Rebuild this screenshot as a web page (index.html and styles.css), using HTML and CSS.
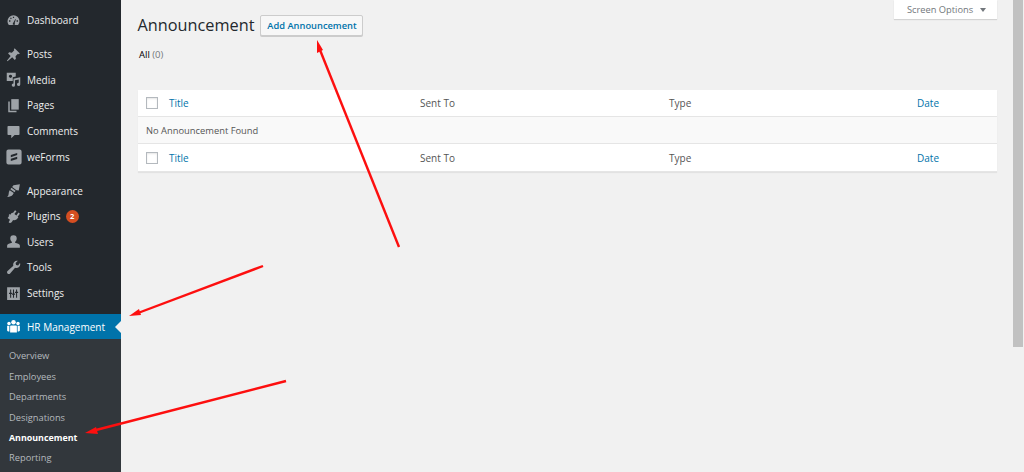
FILE: index.html
```html
<!DOCTYPE html>
<html lang="en">
<head>
<meta charset="utf-8">
<title>Announcement</title>
<link rel="stylesheet" href="styles.css">
</head>
<body>
<div class="app">
  <nav class="side">
    <ul class="menu">
      <li class="item"><svg class="ico" viewBox="0 0 20 20"><path fill-rule="evenodd" d="M10 3a8 8 0 0 0-8 8c0 2 .7 3.700 1.900 5h12.200A8 8 0 0 0 18 11a8 8 0 0 0-8-8zM9.200 5h1.600v1.800H9.200zM5.500 6.800l1.300-.7.800 1.400-1.300.8zM4 11.500V9.800h1.900v1.700zM9 14.500c0-.6.2-1 .5-1.300L12.500 8l.6.3-1.600 5.500c.3.300.5.500.5.700 0 .8-.6 1.300-1.500 1.300S9 15.300 9 14.500zM14.100 11.500V9.800H16v1.700z"/></svg><span>Dashboard</span></li>
      <li class="item gap"><svg class="ico" viewBox="0 0 20 20"><path d="M11.500 1.500l7 7-1.600 1-1-.5-3.200 3.200.5 3.600-1.500 1.400-3.400-3.400L2 19l-.8-.8 5-6.300-3.400-3.400L4.200 7l3.600.5L11 4.300l-.5-1z"/></svg><span>Posts</span></li>
      <li class="item"><svg class="ico" viewBox="0 0 20 20"><path fill-rule="evenodd" d="M1 1h12v5l-4 1v5H1zM6 3.500a2.200 2.200 0 1 0 .01 0z"/><path d="M10 9l9-2v9.500a2.200 2.200 0 1 1-2-2.200V10l-5 1.100v6.400a2.200 2.200 0 1 1-2-2.200z"/></svg><span>Media</span></li>
      <li class="item"><svg class="ico" viewBox="0 0 20 20"><path d="M7 1.500h10v14H7z"/><path d="M5 4.500v12.500h9v2H3.500a.5.500 0 0 1-.5-.5v-14z"/></svg><span>Pages</span></li>
      <li class="item"><svg class="ico" viewBox="0 0 20 20"><path d="M3 2.500h14a1 1 0 0 1 1 1v10a1 1 0 0 1-1 1h-5.500L7 19v-4.500H3a1 1 0 0 1-1-1v-10a1 1 0 0 1 1-1z"/></svg><span>Comments</span></li>
      <li class="item"><svg class="ico wide" viewBox="0 0 20 20"><path fill-rule="evenodd" d="M3 .5h14A2.500 2.500 0 0 1 19.500 3v14a2.500 2.500 0 0 1-2.500 2.500H3A2.500 2.500 0 0 1 .5 17V3A2.500 2.500 0 0 1 3 .5zM6 7.500v2.700l8-2.600V5zM6 12.300v2.700l8-2.600V9.700z"/></svg><span>weForms</span></li>
      <li class="item gap"><svg class="ico" viewBox="0 0 20 20"><path d="M10 3l8.500-1.500L17 10l-3-.4-5.800-4.300zM7.300 6.300l5.500 4.100-1.400 2-5.600-4zM5 9.500l5.300 3.800-1.300 2.500c-1.500 2-4.500 2.800-7.500 2.700C3 17.300 3.400 16 3.600 14c.1-1.500.4-3.200 1.400-4.500z"/></svg><span>Appearance</span></li>
      <li class="item"><svg class="ico" viewBox="0 0 20 20"><path d="M12 1.500l2 1.400-2.800 3.700 2.600 1.900 2.800-3.700 1.900 1.400-3 4 1 .9-1.300 1.700c-1.500 2-3.700 2.600-5.700 1.900l-1.500 2.300c-.7 1-1.700 1.600-3 1.700l-1.500-1 1.800-3.400L2.200 12l1.200-1.600 1-1.300-.9-.8 1.200-1.500 1 .7 1.800-2.300 2-.2z"/></svg><span>Plugins</span><b class="badge">2</b></li>
      <li class="item"><svg class="ico" viewBox="0 0 20 20"><path d="M10 1.500a4.300 4.300 0 0 1 4.300 4.500c0 2-1 3.700-2.200 4.600v1c2.700.6 6.400 1.800 6.400 3.700v3h-17v-3c0-1.900 3.700-3.100 6.400-3.700v-1C6.700 9.700 5.700 8 5.700 6A4.300 4.300 0 0 1 10 1.500z"/></svg><span>Users</span></li>
      <li class="item"><svg class="ico" viewBox="0 0 20 20"><path d="M19 5.500c0 2.900-2.500 5.200-5.200 5.200-.6 0-1.100-.1-1.700-.3L5.500 18c-1 1-2.500 1-3.500 0-.9-.9-.9-2.300.1-3.300l7.700-7A5.200 5.200 0 0 1 15.800 1L12.800 4l.6 2.700 2.700.6 2.500-3.200c.2.500.4.900.4 1.400z"/></svg><span>Tools</span></li>
      <li class="item"><svg class="ico" viewBox="0 0 20 20"><path fill-rule="evenodd" d="M1.500 1.500h17v17h-17zM5.500 4.500V9H4v1.800h1.500v4.700h1.400v-4.700h1.400V9H6.900V4.500zM9.300 15.500h1.400v-3.700h1.400V10h-1.400V4.500H9.300V10H8v1.800h1.300zM13.400 4.500v3h-1.500v1.800h1.500v6.200h1.400V9.300h1.400V7.500h-1.400v-3z"/></svg><span>Settings</span></li>
      <li class="item active"><svg class="ico" viewBox="0 0 20 20"><circle cx="10" cy="4.300" r="3"/><circle cx="4" cy="6" r="2.300"/><circle cx="16" cy="6" r="2.300"/><path d="M6.800 8.500h6.400c.7 0 1.300.6 1.300 1.300V18h-9V9.800c0-.7.600-1.300 1.300-1.300zM1.500 9h3v7.500h-1.500c-.8 0-1.500-.7-1.500-1.500zM15.500 9h3v6c0 .8-.7 1.500-1.500 1.500h-1.500z"/></svg><span>HR Management</span></li>
      <li class="sub">
        <ul class="sublist">
          <li>Overview</li>
          <li>Employees</li>
          <li>Departments</li>
          <li>Designations</li>
          <li class="current">Announcement</li>
          <li>Reporting</li>
        </ul>
      </li>
    </ul>
  </nav>
  <main class="content">
    <div class="tabs"><div class="screen">Screen Options<i class="caret"></i></div></div>
    <header class="head"><h1>Announcement</h1><a class="add">Add Announcement</a></header>
    <p class="filter"><strong>All</strong> <span>(0)</span></p>
    <section class="table">
      <div class="row"><i class="check"></i><a>Title</a><span>Sent To</span><span>Type</span><a>Date</a></div>
      <div class="row empty">No Announcement Found</div>
      <div class="row"><i class="check"></i><a>Title</a><span>Sent To</span><span>Type</span><a>Date</a></div>
    </section>
  </main>
  <div class="scrollbar"><div class="thumb"></div></div>
</div>
<svg class="arrows" viewBox="0 0 1024 472">
  <g stroke="#fd0f0f" stroke-width="2.400" fill="#fd0f0f">
    <line x1="399" y1="247" x2="320" y2="50"/>
    <line x1="263" y1="266" x2="138" y2="313"/>
    <line x1="286" y1="381" x2="96" y2="430"/>
  </g>
  <g fill="#fd0f0f">
    <path d="M317 40l6 10-6 3z"/>
    <path d="M129 316l10-7 2 6z"/>
    <path d="M85 433l11-6 2 7z"/>
  </g>
</svg>
</body>
</html>
```
FILE: styles.css
```css
* { box-sizing: border-box; }
html, body { margin: 0; height: 100%; overflow: hidden; }
body { font-family: "Open Sans", "Liberation Sans", sans-serif; font-size: 10px; color: #444; background: #f1f1f1; }
ul { list-style: none; margin: 0; padding: 0; }
.app { display: flex; height: 472px; }
.side { width: 121px; flex: none; background: #23282d; padding-top: 7.500px; overflow: hidden; }
.item { display: flex; align-items: center; height: 25.600px; color: #eee; position: relative; }
.item.gap { margin-top: 8.400px; }
.item span { margin-left: 6px; }
.ico { width: 15px; height: 15px; margin-left: 6px; fill: #9ea3a8; flex: none; }
.ico.wide { width: 16px; height: 16px; margin-left: 5.500px; margin-right: -.5px; }
.badge { margin-left: 5px; width: 13px; height: 13px; border-radius: 50%; background: #d54e21; color: #fff; font-size: 7.500px; line-height: 13px; text-align: center; font-weight: 700; }
.active { background: #0073aa; color: #fff; margin-top: 8px; }
.active .ico { fill: #fff; }
.active::after { content: ""; position: absolute; right: 0; top: 7px; border: 6px solid transparent; border-left-width: 0; border-right-color: #f1f1f1; }
.sub { background: #32373c; padding: 7px 0 7px; }
.sublist li { height: 20.400px; line-height: 20.400px; padding-left: 9px; font-size: 9.300px; color: #b4b9be; }
.sublist .current { color: #fff; font-weight: 700; font-size: 8.900px; }
.content { flex: none; width: 892px; padding-left: 16.500px; padding-right: 16px; }
.tabs { display: flex; justify-content: flex-end; height: 0; }
.screen { width: 103px; height: 19px; flex: none; background: #fff; box-shadow: 0 1px 1px rgba(0,0,0,.12); display: flex; align-items: center; justify-content: center; gap: 7px; padding-left: 2px; font-size: 9.300px; color: #72777c; }
.caret { width: 0; height: 0; border: 3.500px solid transparent; border-top: 4.500px solid #72777c; border-bottom: 0; }
.head { display: flex; align-items: center; gap: 6px; height: 21px; margin-top: 14.500px; }
h1 { margin: 0; font-size: 16.300px; font-weight: 400; color: #23282d; line-height: 21px; }
.add { display: block; height: 21px; line-height: 19px; width: 103px; text-align: center; background: #f7f7f7; border: 1px solid #ccc; border-radius: 2px; box-shadow: 0 1px 0 #ccc; color: #0073aa; font-size: 9.300px; font-weight: 600; }
.filter { margin: 12.500px 0 0 1.500px; height: 14px; line-height: 14px; font-size: 9.500px; color: #72777c; }
.filter strong { font-weight: 400; color: #000; }
.table { margin-top: 28px; width: 859px; margin-left: .5px; background: #fff; box-shadow: 0 1px 1px rgba(0,0,0,.06); border: 1px solid #e5e5e5; border-width: 0 0 1px; }
.row { display: grid; grid-template-columns: 31px 251px 249px 248px 1fr; align-items: center; height: 27px; font-size: 10px; color: #555; border-bottom: 1px solid #e5e5e5; }
.row:last-child { border-bottom: 0; }
.row a { color: #0073aa; }
.empty { display: block; padding-left: 8px; line-height: 27px; background: #f9f9f9; color: #555; font-size: 9.350px; }
.check { display: block; width: 12px; height: 12px; margin-left: 8px; background: #fff; border: 1px solid #b4b9be; box-shadow: inset 0 1px 2px rgba(0,0,0,.1); }
.scrollbar { width: 11px; background: #f1f1f1; flex: none; padding-right: 1px; }
.thumb { height: 347px; background: #c1c1c1; }
.arrows { position: absolute; left: 0; top: 0; width: 1024px; height: 472px; pointer-events: none; }
```
